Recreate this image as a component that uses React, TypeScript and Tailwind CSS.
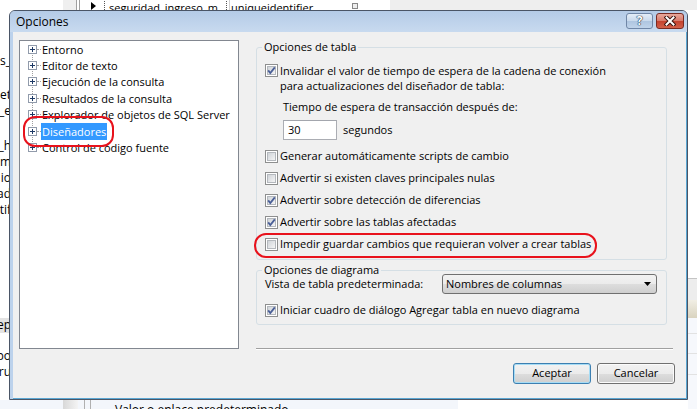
import React from "react";

function Cb({ checked }: { checked?: boolean }) {
  return (
    <svg width="13" height="13" viewBox="0 0 13 13" className="shrink-0" shapeRendering="crispEdges">
      <defs>
        <linearGradient id="cbgrad" x1="0" y1="0" x2="1" y2="1">
          <stop offset="0" stopColor="#cdd1d6" />
          <stop offset="1" stopColor="#f7f7f7" />
        </linearGradient>
      </defs>
      <rect x="0.5" y="0.5" width="12" height="12" fill="#fff" stroke="#8e8f8f" />
      <rect x="2.5" y="2.5" width="8" height="8" fill="url(#cbgrad)" stroke="#b4b8bd" />
      {checked && (
        <path d="M3.2 6.4 L5.3 9 L9.8 3.4" fill="none" stroke="#4a5f97" strokeWidth="1.8" shapeRendering="geometricPrecision" />
      )}
    </svg>
  );
}

function Plus() {
  return (
    <svg width="9" height="9" viewBox="0 0 9 9" className="shrink-0 relative" shapeRendering="crispEdges">
      <rect x="0.5" y="0.5" width="8" height="8" fill="#fff" stroke="#919bab" />
      <path d="M2 4.5h5M4.5 2v5" stroke="#1e3a66" />
    </svg>
  );
}

function CheckRow({ checked, children }: { checked?: boolean; children: React.ReactNode }) {
  return (
    <div className="flex items-center h-[22px] gap-[2px]">
      <Cb checked={checked} />
      <span className="whitespace-nowrap">{children}</span>
    </div>
  );
}

const treeItems = [
  "Entorno",
  "Editor de texto",
  "Ejecución de la consulta",
  "Resultados de la consulta",
  "Explorador de objetos de SQL Server",
  "Diseñadores",
  "Control de código fuente",
];

const fragments: [string, number][] = [
  ["s_", 61],
  ["et", 95],
  ["_e", 111],
  ["_h", 146],
  ["em", 162],
  ["io", 178],
  ["ad", 194],
  ["tif", 210],
  ["po", 356],
  ["ru", 372],
];

const btn =
  "w-[78px] h-[21px] rounded-[3px] flex items-center justify-center bg-[linear-gradient(to_bottom,#f2f2f2_0%,#ebebeb_50%,#dddddd_51%,#cfcfcf_100%)]";

export default function App() {
  return (
    <div className="relative w-[697px] h-[409px] overflow-hidden bg-white text-black text-[11px] font-['Open_Sans',sans-serif]">
      {/* background application (behind the dialog) */}
      <div className="absolute inset-0">
        <div className="absolute left-[63px] top-0 w-[13px] h-[10px] bg-[#efefef]" />
        <div className="absolute left-[76px] top-0 w-px h-[10px] bg-[#a0a0a0]" />
        <div className="absolute left-[79px] top-0 w-px h-[10px] bg-[#a0a0a0]" />
        <div className="absolute left-[91px] top-[2px] w-0 h-0 border-y-[4px] border-y-transparent border-l-[5px] border-l-black" />
        <div className="absolute left-[104px] top-[-2px] w-[123px] h-[14px] border border-dotted border-[#555]" />
        <div className="absolute left-[109px] top-0 leading-[16px] text-[11px] whitespace-nowrap">seguridad_ingreso_m</div>
        <div className="absolute left-[229px] top-0 w-px h-[10px] bg-[#d0d0d0]" />
        <div className="absolute left-[231px] top-0 leading-[16px] text-[11px] whitespace-nowrap">uniqueidentifier</div>
        <div className="absolute left-[352px] top-[3px] w-[6px] h-[6px] border border-[#888] bg-[#eee]" />
        <div className="absolute left-[390px] top-0 right-0 h-[10px] bg-[#eeeeee]" />

        {fragments.map(([t, y]) => (
          <div key={t} className="absolute right-[686px] text-[12px] leading-[16px] whitespace-nowrap" style={{ top: y - 8 }}>
            {t}
          </div>
        ))}
        <div className="absolute left-0 top-[318px] w-[10px] h-[15px] bg-[#e3e3e3]" />
        <div className="absolute right-[686px] top-[317px] text-[12px] leading-[16px]">rep</div>

        <div className="absolute left-0 top-[400px] w-[458px] h-[9px] bg-[#f3f6fb]" />
        <div className="absolute left-[63px] top-[400px] w-[15px] h-[9px] bg-[linear-gradient(to_right,#d8d8d8,#f4f4f4)]" />
        <div className="absolute left-[84px] top-[400px] w-px h-[9px] bg-[#b0b0b0]" />
        <div className="absolute left-[90px] top-[400px] w-px h-[9px] bg-[#b0b0b0]" />
        <div className="absolute left-[115px] top-[402px] text-[12px] leading-[16px] whitespace-nowrap">Valor o enlace predeterminado</div>

        <div className="absolute left-[688px] top-[278px] right-0 h-px bg-[#c4c4c4]" />
        <div className="absolute left-[688px] top-[279px] right-0 h-[21px] bg-[#ededed]" />
        <div className="absolute left-[688px] top-[300px] right-0 h-[18px] bg-[linear-gradient(to_bottom,#f1eee4,#d9d3bf)]" />
        <div className="absolute left-[688px] top-[318px] right-0 h-[91px] bg-[#f6f8fc]" />
        <div className="absolute left-[688px] top-[333px] right-0 h-px bg-[#e2e2e2]" />
        <div className="absolute left-[688px] top-[353px] right-0 h-px bg-[#e2e2e2]" />
        <div className="absolute left-[688px] top-[374px] right-0 h-px bg-[#e2e2e2]" />
      </div>

      {/* dialog window */}
      <div className="absolute left-[9px] top-[10px] w-[679px] h-[390px] border border-[#4a5566] rounded-t-[6px] bg-[#bcd2ec] flex flex-col">
        {/* title bar */}
        <div className="h-[21px] flex items-start bg-[linear-gradient(to_bottom,#b4cbe7,#c8daef)] rounded-t-[5px]">
          <div className="pl-[6px] h-[21px] flex items-center text-[12px]">Opciones</div>
          <div className="ml-auto mt-[2px] mr-[3px] flex gap-[3px]">
            <div className="w-[27px] h-[16px] rounded-[3px] border border-[#6f86a6] bg-[linear-gradient(to_bottom,#e4edf7_0%,#c9d9ec_50%,#aec5e0_51%,#bfd3ea_100%)] flex items-center justify-center">
              <span className="text-[12px] leading-none font-bold text-white [text-shadow:0_0_1px_#1e2d45,0_0_1px_#1e2d45,0_0_1px_#1e2d45]">?</span>
            </div>
            <div className="w-[28px] h-[16px] rounded-[3px] border border-[#7a2a22] bg-[linear-gradient(to_bottom,#e8a89c_0%,#d8796a_50%,#c4412e_51%,#d2604a_100%)] flex items-center justify-center">
              <svg width="12" height="10" viewBox="0 0 12 10">
                <path d="M2.5 1.5 L9.5 8.5 M9.5 1.5 L2.5 8.5" stroke="#3a1410" strokeWidth="4" strokeLinecap="square" />
                <path d="M2.5 1.5 L9.5 8.5 M9.5 1.5 L2.5 8.5" stroke="#ffffff" strokeWidth="2" strokeLinecap="square" />
              </svg>
            </div>
          </div>
        </div>

        {/* client area */}
        <div className="ml-[3px] w-[674px] h-[367px] bg-[#f0f0f0] border-r border-b border-[#5aa6d2] flex flex-col">
          <div className="flex pt-[7px] pl-[6px]">
            {/* tree */}
            <div className="mt-[1px] w-[220px] h-[309px] border border-[#828790] bg-white">
              <div className="relative">
                <div className="absolute left-[12px] top-[8px] h-[99px] border-l border-dotted border-[#a0a0a0]" />
                {treeItems.map((t) => (
                  <div key={t} className="relative flex items-center h-[16.4px] pl-[8px]">
                    <Plus />
                    <div className="w-[4px] border-t border-dotted border-[#a0a0a0]" />
                    <span
                      className={
                        "px-[1px] h-[17px] leading-[17px] whitespace-nowrap " +
                        (t === "Diseñadores" ? "bg-[#3399ff] text-white" : "")
                      }
                    >
                      {t}
                    </span>
                  </div>
                ))}
              </div>
            </div>

            {/* right panel */}
            <div className="ml-[17px] w-[417px] flex flex-col">
              <fieldset className="w-[411px] border border-[#d5dfe5] rounded-[3px]">
                <legend className="ml-[5px] px-[2px] h-[16px] leading-[16px]">Opciones de tabla</legend>
                <div className="pl-[8px] pb-[4px] flex flex-col">
                  <div className="mt-[8px] flex items-start gap-[2px]">
                    <div className="h-[15px] flex items-center">
                      <Cb checked />
                    </div>
                    <div className="leading-[15px]">
                      Invalidar el valor de tiempo de espera de la cadena de conexión
                      <br />
                      para actualizaciones del diseñador de tabla:
                    </div>
                  </div>
                  <div className="mt-[6px] ml-[18px] leading-[15px]">Tiempo de espera de transacción después de:</div>
                  <div className="mt-[6px] ml-[18px] flex items-center">
                    <div className="w-[54px] h-[20px] border border-[#abadb3] border-t-[#a3a6ad] bg-white flex items-center pl-[4px]">30</div>
                    <span className="ml-[6px]">segundos</span>
                  </div>
                  <div className="mt-[5px]">
                    <CheckRow>Generar automáticamente scripts de cambio</CheckRow>
                    <CheckRow>Advertir si existen claves principales nulas</CheckRow>
                    <CheckRow checked>Advertir sobre detección de diferencias</CheckRow>
                    <CheckRow checked>Advertir sobre las tablas afectadas</CheckRow>
                    <CheckRow>Impedir guardar cambios que requieran volver a crear tablas</CheckRow>
                  </div>
                </div>
              </fieldset>

              <fieldset className="mt-[3px] w-[411px] border border-[#d5dfe5] rounded-[3px]">
                <legend className="ml-[5px] px-[2px] h-[14px] leading-[14px]">Opciones de diagrama</legend>
                <div className="pl-[8px] pr-[9px] pb-[3px] flex flex-col">
                  <div className="mt-[-3px] h-[20px] flex items-center justify-between">
                    <span>Vista de tabla predeterminada:</span>
                    <div className="w-[215px] h-[20px] rounded-[3px] border border-[#707070] bg-[linear-gradient(to_bottom,#f2f2f2_0%,#ebebeb_50%,#dddddd_51%,#cfcfcf_100%)] flex items-center pl-[3px] pr-[5px]">
                      <span>Nombres de columnas</span>
                      <svg className="ml-auto" width="7" height="4" viewBox="0 0 7 4">
                        <path d="M0 0h7L3.5 4z" fill="#000" />
                      </svg>
                    </div>
                  </div>
                  <div className="mt-[5px]">
                    <CheckRow checked>Iniciar cuadro de diálogo Agregar tabla en nuevo diagrama</CheckRow>
                  </div>
                </div>
              </fieldset>

              <div className="mt-[23px] w-[417px] h-[2px] border-t border-[#a0a0a0] border-b border-b-white" />
            </div>
          </div>

          <div className="mt-[13px] pr-[11px] flex justify-end gap-[6px]">
            <div className={btn + " border border-[#3c7fb1] shadow-[inset_0_0_0_1px_#a6dcf5]"}>Aceptar</div>
            <div className={btn + " border border-[#707070] shadow-[inset_0_0_0_1px_#fbfbfb]"}>Cancelar</div>
          </div>
        </div>
      </div>

      {/* red annotation rings */}
      <div className="absolute left-[23px] top-[116px] w-[91px] h-[31px] border-2 border-[#e8121c] rounded-[12px]" />
      <div className="absolute left-[254px] top-[233px] w-[343px] h-[25px] border-2 border-[#e8121c] rounded-[12px]" />
    </div>
  );
}
